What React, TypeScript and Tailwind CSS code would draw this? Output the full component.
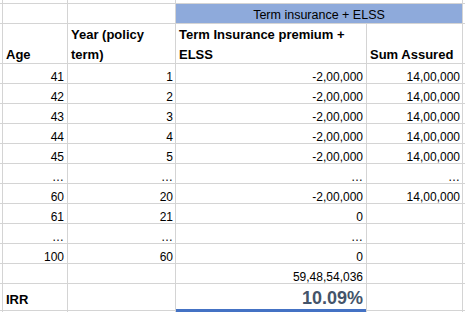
const rows: [string, string, string, string][] = [
  ["41", "1", "-2,00,000", "14,00,000"],
  ["42", "2", "-2,00,000", "14,00,000"],
  ["43", "3", "-2,00,000", "14,00,000"],
  ["44", "4", "-2,00,000", "14,00,000"],
  ["45", "5", "-2,00,000", "14,00,000"],
  ["…", "…", "…", "…"],
  ["60", "20", "-2,00,000", "14,00,000"],
  ["61", "21", "0", ""],
  ["…", "…", "…", ""],
  ["100", "60", "0", ""],
  ["", "", "59,48,54,036", ""],
];

function Num({ v, pr = "pr-[3px]" }: { v: string; pr?: string }) {
  return (
    <div className={`bg-white flex items-end justify-end leading-none text-[12px] ${pr}`}>
      <span>{v}</span>
    </div>
  );
}

function Head({ children }: { children: React.ReactNode }) {
  return (
    <div className="bg-white flex items-end pl-[3px] font-bold text-[13px]">
      <div className="leading-[20px] -mb-[2px]">{children}</div>
    </div>
  );
}

export default function App() {
  return (
    <div
      className="w-[465px] h-[312px] overflow-hidden bg-[#d4d4d4] text-black grid gap-px"
      style={{
        fontFamily: '"Liberation Sans", Arial, sans-serif',
        gridTemplateColumns: "2px 64px 107px 190px 95px 2px",
        gridTemplateRows: "3px 19px 39px repeat(11, 19px) 26px 1px",
      }}
    >
      {/* top sliver row */}
      <div className="bg-white" />
      <div className="bg-white" />
      <div className="bg-white" />
      <div className="bg-white col-span-2" />
      <div className="bg-white" />

      {/* merged title */}
      <div className="bg-white" />
      <div className="bg-white" />
      <div className="bg-white" />
      <div className="col-span-2 bg-[#8eaadb] flex items-end justify-center pb-[2px] leading-none text-[12.5px]">
        Term insurance + ELSS
      </div>
      <div className="bg-white" />

      {/* column headers */}
      <div className="bg-white" />
      <Head>Age</Head>
      <Head>
        Year (policy
        <br />
        term)
      </Head>
      <Head>
        Term Insurance premium +
        <br />
        ELSS
      </Head>
      <Head>Sum Assured</Head>
      <div className="bg-white" />

      {rows.map((r, i) => (
        <div key={i} className="contents">
          <div className="bg-white" />
          <Num v={r[0]} />
          <Num v={r[1]} pr="pr-[2px]" />
          <Num v={r[2]} />
          <Num v={r[3]} pr="pr-[2px]" />
          <div className="bg-white" />
        </div>
      ))}

      {/* IRR row */}
      <div className="bg-white" />
      <div className="bg-white flex items-end pl-[3px] pb-[4px] leading-none font-bold text-[13px]">
        IRR
      </div>
      <div className="bg-white" />
      <div className="row-span-2 bg-white border-b-[3px] border-[#4472c4] flex items-end justify-end pr-[3px] pb-[2px] leading-none font-bold text-[18px] text-[#44546a]">
        10.09%
      </div>
      <div className="bg-white" />
      <div className="bg-white" />

      {/* bottom sliver row */}
      <div className="bg-white" />
      <div className="bg-white" />
      <div className="bg-white" />
      <div className="bg-white" />
      <div className="bg-white" />
    </div>
  );
}
